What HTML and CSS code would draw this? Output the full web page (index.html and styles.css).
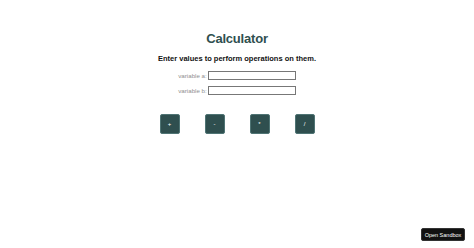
FILE: index.html
```html
<!DOCTYPE html>
<html>
<head>
<meta charset="utf-8">
<link rel="stylesheet" href="styles.css">
</head>
<body>
<div class="app">
  <h1 class="title">Calculator</h1>
  <p class="subtitle">Enter values to perform operations on them.</p>
  <div class="field"><label class="label">variable a:</label><input class="input" type="text"></div>
  <div class="field"><label class="label">variable b:</label><input class="input" type="text"></div>
  <div class="ops">
    <button class="op">+</button>
    <button class="op">-</button>
    <button class="op">*</button>
    <button class="op">/</button>
  </div>
</div>
<button class="sandbox">Open Sandbox</button>
</body>
</html>
```
FILE: styles.css
```css
html, body {
  margin: 0;
  padding: 0;
  background: #fff;
  width: 474px;
  height: 248px;
  overflow: hidden;
  font-family: "Liberation Sans", Arial, sans-serif;
}
.app {
  display: flex;
  flex-direction: column;
  align-items: center;
  padding-top: 31px;
}
.title {
  margin: 0;
  font-size: 13px;
  letter-spacing: -0.2px;
  line-height: 16px;
  font-weight: bold;
  color: #2f4f4f;
}
.subtitle {
  margin: 7px 0 0;
  font-size: 7.5px;
  line-height: 10px;
  font-weight: bold;
  color: #111;
}
.field {
  display: flex;
  align-items: center;
  margin-top: 7px;
}
.field + .field {
  margin-top: 6px;
}
.label {
  font-size: 6.2px;
  color: #8f8f8f;
  line-height: 9px;
}
.input {
  width: 88px;
  height: 9px;
  box-sizing: border-box;
  border: 1px solid #777;
  padding: 0;
  margin: 0 0 0 1px;
  background: #fff;
}
.ops {
  display: flex;
  gap: 25px;
  margin-top: 19px;
}
.op {
  width: 20px;
  height: 20px;
  box-sizing: border-box;
  padding: 0;
  margin: 0;
  background: #2f4f4f;
  border: 1px solid #4f7474;
  border-radius: 2px;
  color: #fff;
  font-size: 6px;
  font-family: "Liberation Sans", Arial, sans-serif;
  display: flex;
  align-items: center;
  justify-content: center;
}
.sandbox {
  position: absolute;
  left: 421px;
  top: 228px;
  width: 44px;
  height: 13px;
  box-sizing: border-box;
  padding: 0;
  background: #111;
  border: 1px solid #333;
  border-radius: 2px;
  color: #fff;
  font-size: 5.5px;
  font-family: "Liberation Sans", Arial, sans-serif;
  display: flex;
  align-items: center;
  justify-content: center;
}
```
